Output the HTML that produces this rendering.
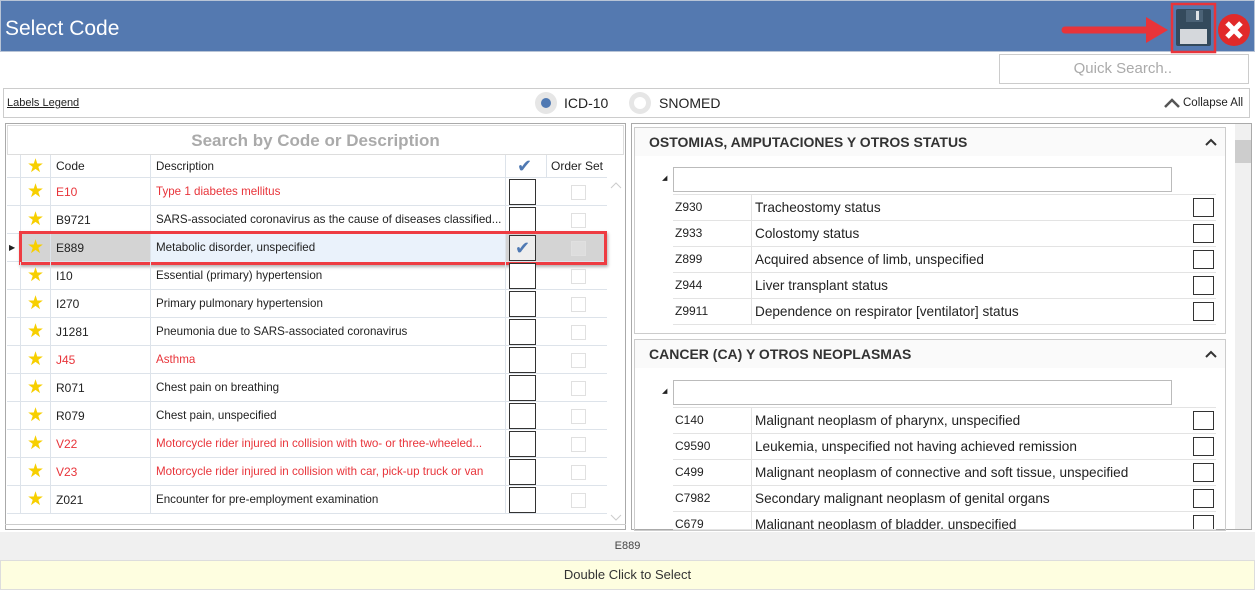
<!DOCTYPE html><html><head><style>
*{box-sizing:border-box;margin:0;padding:0}
body{width:1255px;height:590px;overflow:hidden;font-family:"Liberation Sans",sans-serif;background:#fff;position:relative;font-size:12px;color:#222}
.a{position:absolute}
.title{left:0;top:0;width:1255px;height:52px;background:#5479b0;border:1px solid #b8c4d6}
.title span{position:absolute;left:4px;top:16px;color:#fff;font-size:21px}
.row{position:absolute;left:7px;width:600px;height:28px;border-bottom:1px solid #dde3ea}
.row div{position:absolute;top:0;height:28px;line-height:28px}
.red{color:#e8343a}
.star{left:13px;width:31px;border-right:1px solid #dde3ea;border-left:1px solid #dde3ea;color:#f7cf00;font-size:19px;text-align:center}
.code{left:44px;width:100px;padding-left:5px;border-right:1px solid #dde3ea}
.desc{left:144px;width:355px;padding-left:5px;border-right:1px solid #dde3ea;white-space:nowrap;overflow:hidden;text-overflow:ellipsis;font-size:11.6px}
.cb{position:absolute;left:502px;top:1px;width:27px;height:26px;border:1.5px solid #333;background:#fff}
.os{position:absolute;left:564px;top:7px;width:15px;height:15px;border:1px solid #e0e0e0}
.rr{position:absolute;left:673px;width:543px;height:26px;border-bottom:1px solid #e3e3e3;font-size:14px;line-height:25px}
.rr .c{position:absolute;left:2px;font-size:12px}
.rr .d{position:absolute;left:78px;padding-left:3px;border-left:1px solid #e3e3e3;height:25px;width:440px;font-size:13.6px}
.rr .k{position:absolute;left:520px;top:3px;width:21px;height:19px;border:1.5px solid #333}
.gh{position:absolute;left:635px;width:590px;height:28px;background:#fafafa;font-size:14px;font-weight:bold;color:#333;padding-left:14px;line-height:28px}
.chev{position:absolute;right:8px;top:10px}
</style></head><body>
<div class="a title"><span>Select Code</span></div>
<svg class="a" style="left:1060px;top:0" width="195" height="56">
<path d="M5 30 H95" stroke="#e8343a" stroke-width="7" stroke-linecap="round"/><path d="M86 17 L108 30 L86 43Z" fill="#e8343a"/>
<rect x="112" y="4" width="43" height="48" fill="none" stroke="#e8343a" stroke-width="2.5"/>
<rect x="116" y="9" width="35" height="37" rx="2" fill="#344a5c"/><rect x="126" y="10" width="17" height="12" fill="#4b6276"/><rect x="136" y="11" width="3" height="9" fill="#dfe3e6"/><rect x="120" y="29" width="27" height="15" fill="#d5d8dc"/>
<circle cx="174" cy="30" r="16" fill="#e12a2a"/><path d="M167 23L181 37M181 23L167 37" stroke="#fff" stroke-width="5"/>
</svg>
<div class="a" style="left:999px;top:54px;width:250px;height:30px;border:1px solid #ccc;color:#aaa;font-size:15px;line-height:28px;text-align:right;padding-right:76px">Quick Search..</div>
<div class="a" style="left:3px;top:88px;width:1247px;height:30px;border:1px solid #ccc"></div>
<div class="a" style="left:7px;top:97px;font-size:11px;text-decoration:underline">Labels Legend</div>
<div class="a" style="left:535px;top:92px;width:22px;height:22px;border-radius:50%;background:#e6e6e6"></div><div class="a" style="left:541px;top:98px;width:10px;height:10px;border-radius:50%;background:#4f79b3"></div>
<div class="a" style="left:564px;top:95px;font-size:14px">ICD-10</div>
<div class="a" style="left:629px;top:92px;width:22px;height:22px;border-radius:50%;background:#e6e6e6"></div><div class="a" style="left:634px;top:97px;width:12px;height:12px;border-radius:50%;background:#fff"></div>
<div class="a" style="left:659px;top:95px;font-size:14px">SNOMED</div>
<svg class="a" style="left:1163px;top:96px" width="20" height="14"><path d="M2 11 L9 4 L16 11" stroke="#555" stroke-width="2.5" fill="none"/></svg>
<div class="a" style="left:1183px;top:97px;font-size:11.5px">Collapse All</div>
<div class="a" style="left:5px;top:123px;width:621px;height:407px;border:1px solid #aaa"></div>
<div class="a" style="left:7px;top:125px;width:617px;height:30px;border:1px solid #ddd;text-align:center;color:#aaa;font-weight:bold;font-size:17px;line-height:30px">Search by Code or Description</div>
<div class="row" style="top:155px;height:23px"><div class="star" style="height:23px;line-height:23px">★</div><div class="code" style="height:23px;line-height:23px">Code</div><div class="desc" style="height:23px;line-height:23px">Description</div><div style="left:510px;color:#4f79b3;font-size:18px;line-height:22px">✔</div><div style="left:539px;width:61px;border-left:1px solid #dde3ea;text-align:center;height:23px;line-height:23px">Order Set</div></div>
<div class="row" style="top:178px"><div class="star">★</div><div class="code red">E10</div><div class="desc red">Type 1 diabetes mellitus</div><span class="cb"></span><span class="os"></span></div>
<div class="row" style="top:206px"><div class="star">★</div><div class="code">B9721</div><div class="desc">SARS-associated coronavirus as the cause of diseases classified...</div><span class="cb"></span><span class="os"></span></div>
<div class="row" style="top:234px;background:linear-gradient(90deg,#fff 13px,#d4d4d4 13px)"><div class="star">★</div><div class="code">E889</div><div class="desc" style="background:#eaf2fb">Metabolic disorder, unspecified</div><span class="cb" style="background:#eee;color:#4f79b3;font-size:18px;line-height:24px;text-align:center">✔</span><span class="os" style="background:#ddd"></span></div>
<div class="a" style="left:9px;top:243px;font-size:8px">▶</div>
<div class="a" style="left:19px;top:231px;width:588px;height:34px;border:3px solid #ee3c42;box-shadow:1px 2px 3px rgba(0,0,0,.3)"></div>
<div class="row" style="top:262px"><div class="star">★</div><div class="code">I10</div><div class="desc">Essential (primary) hypertension</div><span class="cb"></span><span class="os"></span></div>
<div class="row" style="top:290px"><div class="star">★</div><div class="code">I270</div><div class="desc">Primary pulmonary hypertension</div><span class="cb"></span><span class="os"></span></div>
<div class="row" style="top:318px"><div class="star">★</div><div class="code">J1281</div><div class="desc">Pneumonia due to SARS-associated coronavirus</div><span class="cb"></span><span class="os"></span></div>
<div class="row" style="top:346px"><div class="star">★</div><div class="code red">J45</div><div class="desc red">Asthma</div><span class="cb"></span><span class="os"></span></div>
<div class="row" style="top:374px"><div class="star">★</div><div class="code">R071</div><div class="desc">Chest pain on breathing</div><span class="cb"></span><span class="os"></span></div>
<div class="row" style="top:402px"><div class="star">★</div><div class="code">R079</div><div class="desc">Chest pain, unspecified</div><span class="cb"></span><span class="os"></span></div>
<div class="row" style="top:430px"><div class="star">★</div><div class="code red">V22</div><div class="desc red">Motorcycle rider injured in collision with two- or three-wheeled...</div><span class="cb"></span><span class="os"></span></div>
<div class="row" style="top:458px"><div class="star">★</div><div class="code red">V23</div><div class="desc red">Motorcycle rider injured in collision with car, pick-up truck or van</div><span class="cb"></span><span class="os"></span></div>
<div class="row" style="top:486px"><div class="star">★</div><div class="code">Z021</div><div class="desc">Encounter for pre-employment examination</div><span class="cb"></span><span class="os"></span></div>
<div class="a" style="left:5px;top:524px;width:621px;height:6px;border-top:1px solid #ccc"></div>
<svg class="a" style="left:610px;top:182px" width="12" height="8"><path d="M1 6 L6 1 L11 6" stroke="#ccc" fill="none"/></svg>
<svg class="a" style="left:610px;top:514px" width="12" height="8"><path d="M1 1 L6 6 L11 1" stroke="#ccc" fill="none"/></svg>
<div class="a" style="left:631px;top:123px;width:621px;height:407px;border:1px solid #aaa"></div>
<div class="a" style="left:1235px;top:124px;width:16px;height:405px;background:#f0f0f0"></div>
<div class="a" style="left:1235px;top:140px;width:16px;height:23px;background:#cdcdcd"></div>
<div class="a" style="left:634px;top:127px;width:592px;height:207px;border:1px solid #ccc"></div>
<div class="gh" style="top:128px">OSTOMIAS, AMPUTACIONES Y OTROS STATUS<svg class="chev" width="12" height="8"><path d="M1 7 L6 2 L11 7" stroke="#333" stroke-width="2" fill="none"/></svg></div>
<div class="a" style="left:662px;top:174px;font-size:7px">◢</div>
<div class="a" style="left:673px;top:167px;width:499px;height:25px;border:1px solid #bbb"></div>
<div class="a" style="left:673px;top:194px;width:543px;border-top:1px solid #e3e3e3"></div>
<div class="rr" style="top:195px"><span class="c">Z930</span><span class="d">Tracheostomy status</span><span class="k"></span></div>
<div class="rr" style="top:221px"><span class="c">Z933</span><span class="d">Colostomy status</span><span class="k"></span></div>
<div class="rr" style="top:247px"><span class="c">Z899</span><span class="d">Acquired absence of limb, unspecified</span><span class="k"></span></div>
<div class="rr" style="top:273px"><span class="c">Z944</span><span class="d">Liver transplant status</span><span class="k"></span></div>
<div class="rr" style="top:299px"><span class="c">Z9911</span><span class="d">Dependence on respirator [ventilator] status</span><span class="k"></span></div>
<div class="a" style="left:634px;top:339px;width:592px;height:192px;border:1px solid #ccc"></div>
<div class="gh" style="top:340px">CANCER (CA) Y OTROS NEOPLASMAS<svg class="chev" width="12" height="8"><path d="M1 7 L6 2 L11 7" stroke="#333" stroke-width="2" fill="none"/></svg></div>
<div class="a" style="left:662px;top:387px;font-size:7px">◢</div>
<div class="a" style="left:673px;top:380px;width:499px;height:25px;border:1px solid #bbb"></div>
<div class="a" style="left:673px;top:407px;width:543px;border-top:1px solid #e3e3e3"></div>
<div class="rr" style="top:408px"><span class="c">C140</span><span class="d">Malignant neoplasm of pharynx, unspecified</span><span class="k"></span></div>
<div class="rr" style="top:434px"><span class="c">C9590</span><span class="d">Leukemia, unspecified not having achieved remission</span><span class="k"></span></div>
<div class="rr" style="top:460px"><span class="c">C499</span><span class="d">Malignant neoplasm of connective and soft tissue, unspecified</span><span class="k"></span></div>
<div class="rr" style="top:486px"><span class="c">C7982</span><span class="d">Secondary malignant neoplasm of genital organs</span><span class="k"></span></div>
<div class="rr" style="top:512px;height:18px;overflow:hidden"><span class="c">C679</span><span class="d">Malignant neoplasm of bladder, unspecified</span><span class="k"></span></div>
<div class="a" style="left:0;top:532px;width:1255px;height:28px;background:#f0f0f0;text-align:center;line-height:28px;font-size:11px;color:#444">E889</div>
<div class="a" style="left:0;top:560px;width:1255px;height:30px;background:#fefee0;border:1px solid #ddd;text-align:center;line-height:28px;font-size:13px;color:#333">Double Click to Select</div>
</body></html>
